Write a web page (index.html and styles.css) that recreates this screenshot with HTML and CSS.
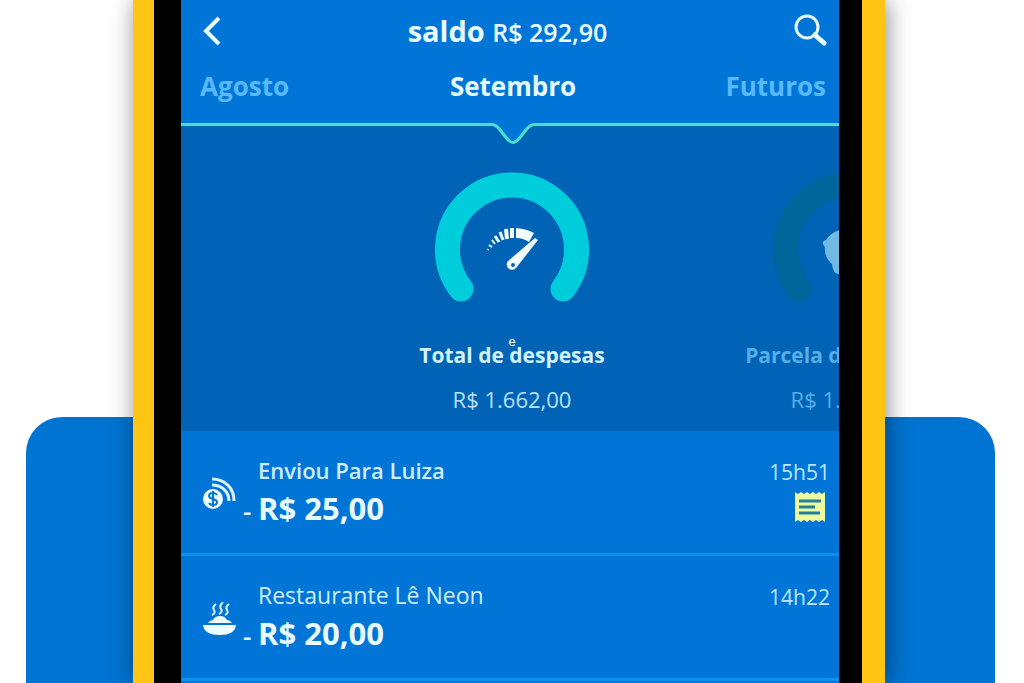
FILE: index.html
```html
<!DOCTYPE html>
<html lang="pt-BR">
<head>
    <meta charset="UTF-8">
    <meta name="viewport" content="width=device-width, initial-scale=1.0">
    <title>Saldo</title>
    <link rel="stylesheet" href="styles.css">
</head>
<body>
    <div class="palco">
        <div class="painel"></div>
        <main class="celular">
            <div class="tela">
                <header class="topo">
                    <button type="button" class="icone-botao" aria-label="Voltar">
                        <svg width="20" height="30" viewBox="0 0 20 30"><path d="M17 2 L4 15 L17 28" fill="none" stroke="#e9fbff" stroke-width="4"/></svg>
                    </button>
                    <h1 class="saldo">saldo <span class="saldo-valor">R$ 292,90</span></h1>
                    <button type="button" class="icone-botao" aria-label="Buscar">
                        <svg width="34" height="34" viewBox="0 0 34 34">
                            <circle cx="14" cy="13" r="11" fill="none" stroke="#e9fbff" stroke-width="3"/>
                            <path d="M22 21 L31 29" stroke="#e9fbff" stroke-width="5" stroke-linecap="round"/>
                        </svg>
                    </button>
                </header>
                <nav class="meses">
                    <button type="button" class="mes">Agosto</button>
                    <button type="button" class="mes ativo">Setembro</button>
                    <button type="button" class="mes">Futuros</button>
                </nav>

                <section class="resumo">
                    <div class="divisor">
                        <span class="linha"></span>
                        <svg width="54" height="24" viewBox="0 0 54 24">
                            <path d="M0 2.5 H9 C14 2.5 17 8 21 13 C25 18 27 20.5 30 20.5 C33 20.5 36 17 39 13 C43 8 46 2.5 51 2.5 H54 V0 H0 Z" fill="#0075d8"/>
                            <path d="M0 2.5 H9 C14 2.5 17 8 21 13 C25 18 27 20.5 30 20.5 C33 20.5 36 17 39 13 C43 8 46 2.5 51 2.5 H54" fill="none" stroke="#48dfce" stroke-width="3"/>
                        </svg>
                        <span class="linha"></span>
                    </div>
                    <div class="carrossel">
                        <article class="cartao">
                            <svg class="medidor" width="156" height="132" viewBox="0 0 156 132">
                                <path d="M27 117 A64.5 64.5 0 1 1 129 117" fill="none" stroke="#00cddc" stroke-width="25" stroke-linecap="round"/>
                                <g stroke="#f2fdff" fill="none">
                                    <path d="M53 77 L55 78" stroke-width="1"/>
                                    <path d="M55 73 L58 75" stroke-width="2"/>
                                    <path d="M58 68 L61 72" stroke-width="2"/>
                                    <path d="M61 64 L65 70" stroke-width="3"/>
                                    <path d="M66 60 L69 68" stroke-width="3"/>
                                    <path d="M72 57 L73 67" stroke-width="4"/>
                                    <path d="M78 56 V66" stroke-width="4"/>
                                </g>
                                <path d="M82 56 Q93 57 100 61 L95 70 Q89 66 82 66 Z" fill="#f2fdff"/>
                                <path fill-rule="evenodd" d="M101 66 L104 68 L82 96 A5 5 0 1 1 74 89 Z M79 91 A2 2 0 1 0 79 95 A2 2 0 1 0 79 91" fill="#f2fdff"/>
                            </svg>
                            <h2 class="cartao-titulo">Total de despesas</h2>
                            <p class="cartao-valor">R$ 1.662,00</p>
                            <span class="marca">e</span>
                        </article>
                        <article class="cartao apagado">
                            <svg class="medidor" width="156" height="132" viewBox="0 0 156 132">
                                <path d="M27 117 A64.5 64.5 0 1 1 129 117" fill="none" stroke="#00669b" stroke-width="25" stroke-linecap="round"/>
                                <path d="M51 72 Q50 69 54 68 Q58 61 68 58 Q96 54 98 76 Q98 92 92 98 L85 102 H68 Q61 103 60 92 Q52 85 53 76 Z" fill="#70b9e2"/>
                            </svg>
                            <h2 class="cartao-titulo">Parcela de despesas</h2>
                            <p class="cartao-valor">R$ 1.662,00</p>
                        </article>
                    </div>
                </section>

                <ul class="lancamentos">
                    <li class="lancamento">
                        <svg class="categoria" width="34" height="36" viewBox="0 0 34 36">
                            <circle cx="10" cy="22" r="10" fill="#effcff"/>
                            <path d="M14 18 Q13 16 10 16 Q6 16 6 19 Q6 21 10 22 Q14 23 14 25 Q14 28 10 28 Q7 28 6 26 M10 14 V30" fill="none" stroke="#0075d8" stroke-width="2"/>
                            <g fill="none" stroke="#dcf5ff" stroke-width="3">
                                <path d="M9 2 C22 2 31 11 31 24"/>
                                <path d="M9 8 C19 8 26 15 26 24"/>
                            </g>
                        </svg>
                        <span class="sinal">-</span>
                        <div class="dados">
                            <h3 class="nome forte">Enviou Para Luiza</h3>
                            <p class="valor">R$ 25,00</p>
                        </div>
                        <div class="lado">
                            <time class="hora">15h51</time>
                            <svg class="recibo" width="30" height="32" viewBox="0 0 30 32">
                                <path d="M0 1 L3 3 L6 1 L9 3 L12 1 L15 3 L18 1 L21 3 L24 1 L27 3 L30 1 V31 L27 29 L24 31 L21 29 L18 31 L15 29 L12 31 L9 29 L6 31 L3 29 L0 31 Z" fill="#edfb9c"/>
                                <path d="M4 10 H26 M4 16 H20 M4 22 H25" stroke="#237f9b" stroke-width="3"/>
                            </svg>
                        </div>
                    </li>
                    <li class="lancamento">
                        <svg class="categoria" width="34" height="36" viewBox="0 0 34 36">
                            <g fill="none" stroke="#dcf5ff" stroke-width="2">
                                <path d="M13 2 Q9 5 11 8 T9 13"/>
                                <path d="M20 0 Q16 4 18 7 T16 12"/>
                                <path d="M26 2 Q22 5 24 8 T22 13"/>
                            </g>
                            <path d="M5 21 Q7 18 10 18 Q12 14 17 14 Q22 14 24 18 Q27 18 29 21 Z M0 23 H33 Q32 33 17 33 Q1 33 0 23 Z" fill="#effcff"/>
                        </svg>
                        <span class="sinal">-</span>
                        <div class="dados">
                            <h3 class="nome">Restaurante Lê Neon</h3>
                            <p class="valor">R$ 20,00</p>
                        </div>
                        <div class="lado">
                            <time class="hora">14h22</time>
                        </div>
                    </li>
                </ul>
            </div>
        </main>
    </div>
</body>
</html>
```
FILE: styles.css
```css
* {
    box-sizing: border-box;
}
body {
    margin: 0;
    background-color: #fff;
    font-family: "Open Sans", "Noto Sans", sans-serif;
    color: #e9fbff;
}
h1, h2, h3, p, ul {
    margin: 0;
    padding: 0;
}
button {
    padding: 0;
    border: none;
    background: none;
    font-family: inherit;
    cursor: pointer;
}
svg {
    display: block;
}

/* painel azul e celular dividem a mesma celula */
.palco {
    display: grid;
    min-height: 100vh;
    overflow: hidden;
}
.painel {
    grid-area: 1 / 1;
    margin: 417px 29px 0 26px;
    background-color: #0074d2;
    border-radius: 36px 36px 0 0;
}
.celular {
    grid-area: 1 / 1;
    min-width: 0;
    margin: 0 139px 0 133px;
    padding: 0 23px 0 21px;
    background-color: #ffc414;
    box-shadow: 2px 0 22px rgba(0, 0, 0, 0.45);
}
.tela {
    min-height: 100%;
    border: solid #000;
    border-width: 0 23px 0 27px;
    background-color: #0075d8;
    overflow: hidden;
}

.topo {
    display: flex;
    justify-content: space-between;
    align-items: center;
    height: 62px;
    padding: 0 12px 0 21px;
}
.saldo {
    font-size: 29px;
    line-height: 36px;
    font-weight: 700;
}
.saldo-valor {
    font-size: 25px;
    font-weight: 600;
}
.meses {
    display: grid;
    grid-template-columns: 1fr auto 1fr;
    height: 60px;
    padding: 6px 13px 18px 19px;
}
.mes {
    justify-self: start;
    font-size: 26px;
    line-height: 36px;
    font-weight: 700;
    color: #5ab9fb;
}
.mes:last-child {
    justify-self: end;
}
.mes.ativo {
    color: #e9fbff;
}

.resumo {
    height: 309px;
    background-color: #0063b5;
}
.divisor {
    display: flex;
}
.linha {
    flex: 1;
    height: 4px;
    border-bottom: 3px solid #48dfce;
    background-color: #0075d8;
}
.carrossel {
    display: flex;
    padding: 26px 0 0 calc(50% - 167px);
}
.cartao {
    position: relative;
    flex: 0 0 338px;
    display: flex;
    flex-direction: column;
    align-items: center;
}
.cartao-titulo {
    margin-top: 35px;
    font-size: 21px;
    line-height: 32px;
    font-weight: 700;
    color: #d3f2ff;
}
.cartao-valor {
    margin-top: 12px;
    font-size: 22px;
    line-height: 32px;
    font-weight: 500;
    color: #b9e2ff;
}
.apagado .cartao-titulo,
.apagado .cartao-valor {
    color: #56aee8;
}
.marca {
    position: absolute;
    top: 162px;
    left: 50%;
    transform: translateX(-50%);
    font-family: "Liberation Sans", Arial, sans-serif;
    font-size: 13px;
    line-height: 16px;
    color: #fff;
}

.lancamentos {
    list-style: none;
}
.lancamento {
    display: flex;
    height: 125px;
    padding: 22px 9px 0 22px;
    border-bottom: 3px solid #0793ef;
}
.categoria {
    margin-top: 24px;
}
.sinal {
    width: 21px;
    padding: 40px 0 0 6px;
    font-size: 26px;
    line-height: 36px;
    font-weight: 600;
}
.dados {
    flex: 1;
}
.nome {
    font-size: 23px;
    line-height: 34px;
    font-weight: 500;
    color: #cdeeff;
}
.nome.forte {
    font-size: 22px;
    font-weight: 600;
}
.valor {
    font-size: 31px;
    line-height: 42px;
    font-weight: 700;
}
.lado {
    display: flex;
    flex-direction: column;
    align-items: flex-end;
}
.hora {
    font-size: 21px;
    line-height: 38px;
    font-weight: 500;
    color: #bfe6ff;
}
.recibo {
    margin-right: 5px;
}
```
